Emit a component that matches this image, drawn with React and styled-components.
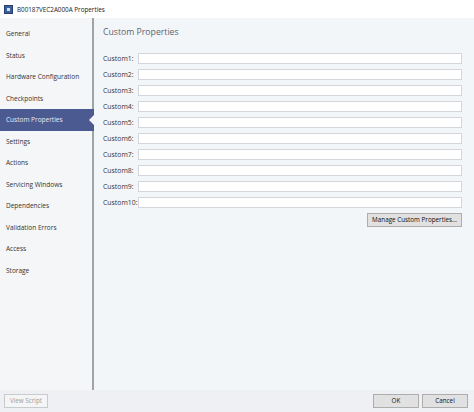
import React from "react";
import styled, { createGlobalStyle } from "styled-components";

const Global = createGlobalStyle`
  html, body { margin: 0; padding: 0; }
  body { font-family: "Open Sans", "Noto Sans", sans-serif; background: #fff; }
  * { box-sizing: border-box; }
`;

const Window = styled.div`
  width: 474px;
  height: 412px;
  display: flex;
  flex-direction: column;
  background: #fff;
  overflow: hidden;
`;

const TitleBar = styled.div`
  height: 18px;
  display: flex;
  align-items: center;
  gap: 4px;
  padding-left: 4px;
  font-size: 6.3px;
  color: #222;
  background: #fff;
`;

const AppIcon = styled.div`
  width: 9px;
  height: 9px;
  background: #3d5f9c;
  border: 1px solid #26406e;
  position: relative;
  &::after {
    content: "";
    position: absolute;
    left: 2px; top: 2px; width: 3px; height: 3px;
    background: #cfe0f5;
  }
`;

const Body = styled.div`
  flex: 1;
  display: flex;
  min-height: 0;
`;

const Sidebar = styled.div`
  width: 94px;
  background: #f5f6f7;
  border-right: 2px solid #9ea3a8;
  padding-top: 5px;
  display: flex;
  flex-direction: column;
`;

const NavItem = styled.div`
  height: 21.5px;
  display: flex;
  align-items: center;
  padding-left: 6px;
  font-size: 6.5px;
  color: ${(p) => (p.$active ? "#e6eaf5" : "#333")};
  background: ${(p) => (p.$active ? "#4b5b92" : "transparent")};
  margin-right: ${(p) => (p.$active ? "-2px" : "0")};
  position: relative;
  &::after {
    content: "";
    display: ${(p) => (p.$active ? "block" : "none")};
    position: absolute;
    right: 0;
    top: 50%;
    transform: translateY(-50%);
    border-top: 5px solid transparent;
    border-bottom: 5px solid transparent;
    border-right: 5px solid #f3f6f9;
  }
`;

const Main = styled.div`
  flex: 1;
  background: #f3f6f9;
  padding: 8px 12px 0 9px;
  display: flex;
  flex-direction: column;
`;

const Heading = styled.div`
  font-size: 8.7px;
  color: #5a6470;
  margin-bottom: 12px;
`;

const Row = styled.div`
  display: flex;
  align-items: center;
  height: 16px;
`;

const Label = styled.div`
  width: 35px;
  font-size: 6.9px;
  color: #333;
`;

const Input = styled.div`
  flex: 1;
  height: 11px;
  background: #fff;
  border: 1px solid #d3d6da;
`;

const ButtonRow = styled.div`
  display: flex;
  justify-content: flex-end;
  margin-top: 3px;
`;

const Button = styled.button`
  font-family: "Open Sans", "Noto Sans", sans-serif;
  font-size: 6.3px;
  height: 14px;
  width: ${(p) => p.$w || "auto"};
  padding: 0 4px;
  background: ${(p) => (p.$disabled ? "#f4f5f6" : "#e1e1e1")};
  border: 1px solid ${(p) => (p.$disabled ? "#c8cacc" : "#adadad")};
  color: ${(p) => (p.$disabled ? "#9a9ea3" : "#111")};
  border-radius: 0;
  line-height: 1;
`;

const Footer = styled.div`
  height: 22px;
  background: #eef0f3;
  display: flex;
  align-items: center;
  justify-content: space-between;
  padding: 0 6px 0 4px;
`;

const FooterRight = styled.div`
  display: flex;
  gap: 3px;
`;

const navItems = [
  "General",
  "Status",
  "Hardware Configuration",
  "Checkpoints",
  "Custom Properties",
  "Settings",
  "Actions",
  "Servicing Windows",
  "Dependencies",
  "Validation Errors",
  "Access",
  "Storage",
];

export default function App() {
  return (
    <>
      <Global />
      <Window>
        <TitleBar>
          <AppIcon />
          <span>B00187VEC2A000A Properties</span>
        </TitleBar>
        <Body>
          <Sidebar>
            {navItems.map((n) => (
              <NavItem key={n} $active={n === "Custom Properties"}>
                {n}
              </NavItem>
            ))}
          </Sidebar>
          <Main>
            <Heading>Custom Properties</Heading>
            {Array.from({ length: 10 }, (_, i) => (
              <Row key={i}>
                <Label>Custom{i + 1}:</Label>
                <Input />
              </Row>
            ))}
            <ButtonRow>
              <Button>Manage Custom Properties...</Button>
            </ButtonRow>
          </Main>
        </Body>
        <Footer>
          <Button $disabled $w="44px">View Script</Button>
          <FooterRight>
            <Button $w="46px">OK</Button>
            <Button $w="46px">Cancel</Button>
          </FooterRight>
        </Footer>
      </Window>
    </>
  );
}
